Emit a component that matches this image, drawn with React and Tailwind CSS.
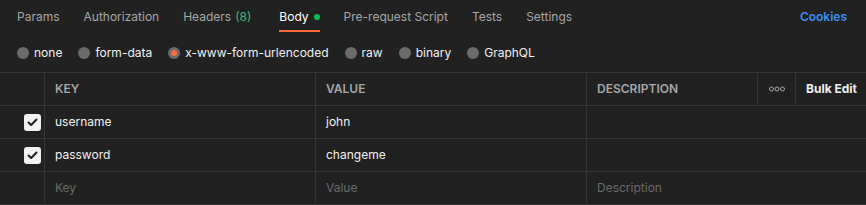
import React from "react";

const tabs = [
  { label: "Params" },
  { label: "Authorization" },
  { label: "Headers", count: "(8)" },
  { label: "Body", active: true, dot: true },
  { label: "Pre-request Script" },
  { label: "Tests" },
  { label: "Settings" },
];

const radios = [
  { label: "none" },
  { label: "form-data" },
  { label: "x-www-form-urlencoded", selected: true },
  { label: "raw" },
  { label: "binary" },
  { label: "GraphQL" },
];

function Check() {
  return (
    <div className="w-[17px] h-[17px] rounded-[3px] bg-[#f2f2f2] flex items-center justify-center">
      <svg width="11" height="9" viewBox="0 0 11 9" fill="none">
        <path d="M1.5 4.5 L4.2 7 L9.5 1.5" stroke="#212121" strokeWidth="2" strokeLinecap="round" strokeLinejoin="round" />
      </svg>
    </div>
  );
}

export default function App() {
  const font = { fontFamily: "Inter, 'Noto Sans', sans-serif" };
  const rows = [
    { k: "username", v: "john" },
    { k: "password", v: "changeme" },
  ];
  return (
    <div className="w-[866px] h-[205px] bg-[#212121] overflow-hidden text-[12px]" style={font}>
      {/* tabs */}
      <div className="flex items-stretch h-8 pl-[17px] pr-[19px]">
        <div className="flex items-stretch gap-6">
          {tabs.map((t) => (
            <div key={t.label} className={"relative flex items-center pt-px" + (t.active ? " ml-[4px]" : "")}>
              <span className={t.active ? "text-[#ffffff]" : "text-[#a6a6a6]"}>{t.label}</span>
              {t.count && <span className="ml-1 text-[#3fb66f]">{t.count}</span>}
              {t.dot && <span className="ml-[5px] w-[6px] h-[6px] rounded-full bg-[#0cbb52]" />}
              {t.active && <span className="absolute left-0 right-0 bottom-0 h-[2px] bg-[#ff6c37]" />}
            </div>
          ))}
        </div>
        <div className="ml-auto flex items-center pt-px font-semibold text-[#3b8ff0]">Cookies</div>
      </div>
      {/* radios */}
      <div className="flex items-center h-10 pl-[17px] pt-[2px] gap-4">
        {radios.map((r) => (
          <div key={r.label} className="flex items-center gap-[5px]">
            <span className="w-3 h-3 rounded-full bg-[#6b6b6b] flex items-center justify-center">
              {r.selected && <span className="w-[6px] h-[6px] rounded-full bg-[#ff6c37]" />}
            </span>
            <span className="text-[#f0f0f0]">{r.label}</span>
          </div>
        ))}
      </div>
      {/* table */}
      <div className="border-t border-[#353535]">
        <div className="grid grid-cols-[45px_271px_271px_171px_38px_1fr] h-[33px] border-b border-[#353535] text-[12px] font-semibold text-[#a6a6a6]">
          <div className="border-r border-[#353535]" />
          <div className="border-r border-[#353535] flex items-center pl-[10px]">KEY</div>
          <div className="border-r border-[#353535] flex items-center pl-[10px]">VALUE</div>
          <div className="border-r border-[#353535] flex items-center pl-[10px]">DESCRIPTION</div>
          <div className="border-r border-[#353535] flex items-center justify-center">
            <svg width="16" height="6" viewBox="0 0 16 6" fill="none" stroke="#a6a6a6" strokeWidth="1">
              <circle cx="2.5" cy="3" r="2" />
              <circle cx="8" cy="3" r="2" />
              <circle cx="13.5" cy="3" r="2" />
            </svg>
          </div>
          <div className="flex items-center pl-[10px] text-[#f0f0f0] font-bold">Bulk Edit</div>
        </div>
        {rows.map((r) => (
          <div key={r.k} className="grid grid-cols-[45px_271px_271px_1fr] h-[33px] border-b border-[#353535] text-[#f0f0f0]">
            <div className="border-r border-[#353535] flex items-center justify-end pr-[3px]">
              <Check />
            </div>
            <div className="border-r border-[#353535] flex items-center pl-[10px]">{r.k}</div>
            <div className="border-r border-[#353535] flex items-center pl-[10px]">{r.v}</div>
            <div />
          </div>
        ))}
        <div className="grid grid-cols-[45px_271px_271px_1fr] h-[33px] border-b border-[#353535] text-[#6b6b6b]">
          <div className="border-r border-[#353535]" />
          <div className="border-r border-[#353535] flex items-center pl-[10px]">Key</div>
          <div className="border-r border-[#353535] flex items-center pl-[10px]">Value</div>
          <div className="flex items-center pl-[10px]">Description</div>
        </div>
      </div>
    </div>
  );
}
